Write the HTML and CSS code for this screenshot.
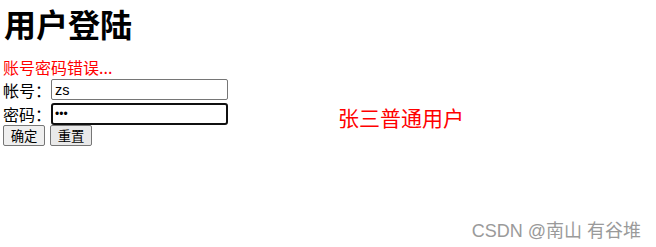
FILE: index.html
```html
<!DOCTYPE html>
<html>
<head>
<meta charset="utf-8">
<link rel="stylesheet" href="styles.css">
</head>
<body>
<h1 class="title">用户登陆</h1>
<div class="main">
  <form class="login">
    <div class="error">账号密码错误...</div>
    <div class="row"><span class="label">帐号：</span><input class="field" type="text" value="zs"></div>
    <div class="row"><span class="label">密码：</span><input class="field focus" type="password" value="123"></div>
    <div class="buttons"><button type="button" class="btn">确定</button><button type="button" class="btn">重置</button></div>
  </form>
  <div class="user">张三普通用户</div>
</div>
<div class="mark">CSDN @南山 有谷堆</div>
</body>
</html>
```
FILE: styles.css
```css
html, body {
  margin: 0;
  padding: 0;
  background: #fff;
}
body {
  padding: 0 3px;
  font-family: "Liberation Sans", "Noto Sans CJK SC", sans-serif;
  font-size: 16px;
  color: #000;
  position: relative;
  height: 247px;
  box-sizing: border-box;
}
.title {
  font-size: 32px;
  font-weight: bold;
  margin: 0 0 12px 1px;
  line-height: normal;
  font-family: "Noto Sans CJK SC", sans-serif;
}
.main {
  display: flex;
  align-items: flex-start;
}
.login {
  width: 335px;
  margin: 0;
}
.error {
  color: #ff0000;
  height: 19px;
  line-height: 19px;
  font-family: "Noto Sans CJK SC", sans-serif;
}
.row {
  display: flex;
  align-items: center;
  height: 23px;
}
.row:nth-child(2) {
  height: 25px;
}
.label {
  width: 48px;
  font-family: "Noto Sans CJK SC", sans-serif;
  line-height: 20px;
}
.field {
  box-sizing: border-box;
  width: 177px;
  height: 21px;
  margin: 0;
  padding: 1px 3px;
  border: 1px solid #767676;
  border-radius: 2px;
  font-family: "Liberation Sans", sans-serif;
  font-size: 14.5px;
}
.field.focus {
  border: 2px solid #101010;
  border-radius: 3px;
  height: 22px;
  padding: 1px 2px;
  outline: none;
  font-size: 12px;
}
.buttons {
  display: flex;
  gap: 5px;
  height: 21px;
}
.btn {
  box-sizing: border-box;
  height: 21px;
  width: 42px;
  padding: 0;
  margin: 0;
  border: 1px solid #767676;
  border-radius: 2px;
  background: #efefef;
  font-family: "Noto Sans CJK SC", sans-serif;
  font-size: 13.33px;
  color: #000;
}
.btn + .btn {
  background: #e9e9e9;
}
.user {
  color: #ff0000;
  font-size: 21px;
  line-height: 30px;
  font-family: "Noto Sans CJK SC", sans-serif;
  margin-top: 44px;
}
.mark {
  position: absolute;
  right: 15px;
  top: 216px;
  color: #9a9a9a;
  font-size: 18px;
  font-family: "Liberation Sans", "Noto Sans CJK SC", sans-serif;
}
```
